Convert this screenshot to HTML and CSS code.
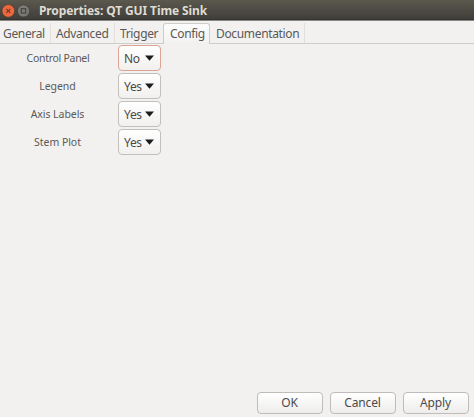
FILE: index.html
```html
<!DOCTYPE html>
<html lang="en">
<head>
<meta charset="utf-8">
<title>Properties: QT GUI Time Sink</title>
<link rel="stylesheet" href="styles.css">
</head>
<body>
<div class="window">
  <header class="titlebar">
    <svg class="controls" width="31" height="20" viewBox="0 0 31 20">
      <circle cx="8.3" cy="9.9" r="6.3" fill="#ed693d" stroke="#4a3a33" stroke-width=".6"/>
      <path d="M6.3 7.9l4 4m0-4l-4 4" stroke="#6b3828" stroke-width="1.2"/>
      <circle cx="23.5" cy="9.9" r="6" fill="#7d7b75" stroke="#3d3c38" stroke-width=".6"/>
      <rect x="21.3" y="7.7" width="4.4" height="4.4" fill="none" stroke="#42413c" stroke-width="1.1"/>
    </svg>
    <h1 class="title">Properties: QT GUI Time Sink</h1>
  </header>
  <nav class="tabs">
    <div class="tab general">General</div>
    <div class="tab advanced">Advanced</div>
    <div class="tab trigger">Trigger</div>
    <div class="tab config active">Config</div>
    <div class="tab documentation">Documentation</div>
  </nav>
  <main class="form">
    <div class="label">Control Panel</div>
    <button class="select focused"><span>No</span><svg width="9" height="6"><path d="M0 .5h9L4.5 5.7z"/></svg></button>
    <div class="label short">Legend</div>
    <button class="select"><span>Yes</span><svg width="9" height="6"><path d="M0 .5h9L4.5 5.7z"/></svg></button>
    <div class="label short">Axis Labels</div>
    <button class="select"><span>Yes</span><svg width="9" height="6"><path d="M0 .5h9L4.5 5.7z"/></svg></button>
    <div class="label short">Stem Plot</div>
    <button class="select"><span>Yes</span><svg width="9" height="6"><path d="M0 .5h9L4.5 5.7z"/></svg></button>
  </main>
  <footer class="actions">
    <button class="action">OK</button>
    <button class="action">Cancel</button>
    <button class="action">Apply</button>
  </footer>
</div>
</body>
</html>
```
FILE: styles.css
```css
* { box-sizing: border-box; }
body { margin: 0; font-family: "Noto Sans", sans-serif; color: #5a5957; }
.window { width: 474px; height: 417px; display: flex; flex-direction: column; background: #f2f1f0; overflow: hidden; }
.titlebar { height: 21px; flex: none; display: flex; align-items: center; background: linear-gradient(#5b584e, #403e3a 19px, #35332f 19px, #35332f 20px, #8b8985 20px); }
.controls { display: block; margin-right: 8px; }
.title { margin: 0; font-size: 12px; font-weight: 700; letter-spacing: -.12px; line-height: 20px; color: #dedbd2; white-space: nowrap; }
.tabs { height: 23px; flex: none; display: flex; border-bottom: 1px solid #cfcdca; padding-top: 2px; }
.tab { height: 20px; border-right: 1px solid #e2e0de; font-size: 12px; letter-spacing: -.34px; line-height: 21px; white-space: nowrap; padding-left: 5px; }
.general { width: 51px; padding-left: 3px; }
.advanced { width: 64px; }
.trigger { width: 48px; border-right: 0; }
.config { width: 47px; padding-left: 6px; }
.documentation { width: 95px; padding-left: 6px; }
.active { height: 21px; background: linear-gradient(#fdfdfd, #f2f1f0); border: 1px solid #cfcdca; border-bottom: 0; border-radius: 3px 3px 0 0; line-height: 19px; }
.form { flex: 1; display: grid; grid-template-columns: 117px 43px; grid-auto-rows: 26px; gap: 2px 1px; align-content: start; padding-top: 1px; }
.label { display: flex; align-items: center; justify-content: center; padding-right: 1px; font-size: 10.5px; letter-spacing: -.28px; white-space: nowrap; }
.short { letter-spacing: -.05px; padding-right: 2px; }
.select { width: 43px; height: 26px; display: flex; align-items: center; justify-content: space-between; padding: 0 6px 0 5px; font: 12px "Noto Sans", sans-serif; letter-spacing: -.3px; color: #4c4b49; background: linear-gradient(#fff, #f1f0ef); border: 1px solid #c2bfbc; border-radius: 4px; }
.select.focused { border-color: #dda493; }
.select svg { fill: #1c1c1c; }
.actions { height: 25px; flex: none; display: flex; justify-content: flex-end; gap: 7px; padding-right: 5px; }
.action { width: 66px; height: 22px; padding: 0 1px 0 0; font: 12px/20px "Noto Sans", sans-serif; letter-spacing: -.15px; color: #4c4b49; background: linear-gradient(#fff, #eeedec); border: 1px solid #bfbcb9; border-radius: 4px; }
```
